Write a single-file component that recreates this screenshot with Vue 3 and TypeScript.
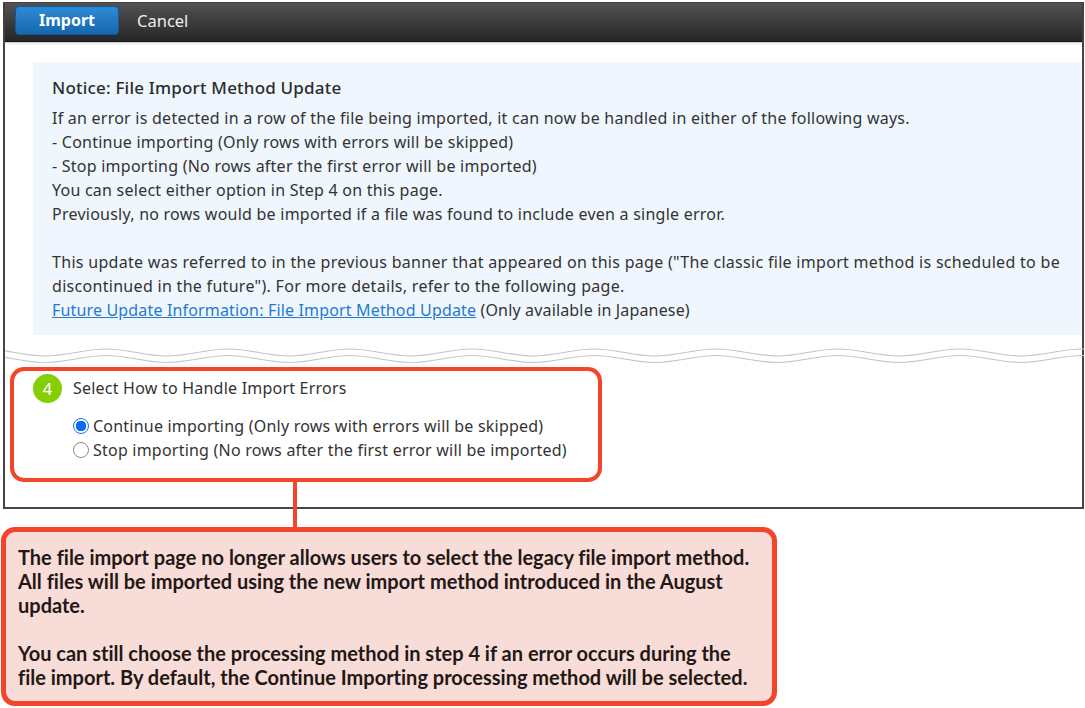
<script setup lang="ts">
const period = 122
const buildWave = (y: number): string => {
  let s = `M -21 ${y}`
  let index = 0
  for (let x = -21; x < 1090; x += period / 2) {
    const a = index % 2 === 0 ? y : y + 7
    const b = index % 2 === 0 ? y + 7 : y
    s += ` C ${x + 22} ${a}, ${x + 39} ${b}, ${x + 61} ${b}`
    index++
  }
  return s
}
const waves = [buildWave(349), buildWave(355.5)]
</script>

<template>
  <div class="page">
    <section class="frame">
      <header class="toolbar">
        <button class="import">Import</button>
        <span class="cancel">Cancel</span>
      </header>
      <div class="notice">
        <h2>Notice: File Import Method Update</h2>
        <p>If an error is detected in a row of the file being imported, it can now be handled in either of the following ways.</p>
        <p>- Continue importing (Only rows with errors will be skipped)</p>
        <p>- Stop importing (No rows after the first error will be imported)</p>
        <p>You can select either option in Step 4 on this page.</p>
        <p>Previously, no rows would be imported if a file was found to include even a single error.</p>
        <p>&nbsp;</p>
        <p class="wide">This update was referred to in the previous banner that appeared on this page ("The classic file import method is scheduled to be discontinued in the future"). For more details, refer to the following page.</p>
        <p class="tight"><a href="#">Future Update Information: File Import Method Update</a> (Only available in Japanese)</p>
      </div>
      <svg class="wave" width="1079" height="25" viewBox="0 339 1079 25">
        <path v-for="p in waves" :key="p" :d="p" fill="none" stroke="#c4c4c4" stroke-width="1.2" />
      </svg>
      <div class="step">
        <div class="step-head">
          <span class="num">4</span>
          <span>Select How to Handle Import Errors</span>
        </div>
        <div class="opt"><span class="radio on"></span>Continue importing (Only rows with errors will be skipped)</div>
        <div class="opt"><span class="radio"></span>Stop importing (No rows after the first error will be imported)</div>
      </div>
    </section>
    <div class="link"></div>
    <aside class="callout">
      <p>The file import page no longer allows users to select the legacy file import method. All files will be imported using the new import method introduced in the August update.</p>
      <p>You can still choose the processing method in step 4 if an error occurs during the file import. By default, the Continue Importing processing method will be selected.</p>
    </aside>
  </div>
</template>

<style>
html, body { margin: 0; background: #fff; }
</style>

<style scoped>
.page {
  position: relative;
  width: 1085px;
  height: 708px;
  overflow: hidden;
  font-family: "Noto Sans", sans-serif;
  color: #333;
}
.frame {
  box-sizing: border-box;
  width: 1081px;
  height: 507px;
  margin: 2px 0 0 3px;
  border: 2px solid #4b4343;
  border-top-width: 1px;
}
.toolbar {
  height: 39px;
  display: flex;
  align-items: center;
  padding: 0 0 4px 10px;
  box-sizing: border-box;
  background: linear-gradient(#525252, #262626);
  border-bottom: 1px solid #111;
  box-shadow: 0 1px 2px rgba(0, 0, 0, .25);
}
.import {
  width: 104px;
  height: 29px;
  border: 1px solid #0f5a9c;
  border-radius: 4px;
  background: linear-gradient(#2f8ad6, #1567ae);
  color: #fff;
  font: 700 16px "Noto Sans", sans-serif;
}
.cancel { margin-left: 18px; color: #eee; font-size: 16.5px; }
.notice {
  box-sizing: border-box;
  height: 273px;
  margin: 20px 0 0 28px;
  padding: 13px 18px 0 19px;
  background: #eff6fe;
  font-size: 16px;
  line-height: 24px;
}
.notice h2 { margin: 0 0 5px; font-size: 17px; font-weight: 500; line-height: 26px; letter-spacing: .2px; color: #2c2c2c; }
.notice p { margin: 0; letter-spacing: .24px; }
.notice p.wide { letter-spacing: .3px; }
.notice p.tight { letter-spacing: .16px; }
.notice a { color: #1f7ad0; }
.wave { display: block; margin-top: 4px; margin-bottom: -25px; }
.step {
  box-sizing: border-box;
  width: 592px;
  height: 115px;
  margin: 28px 0 0 5px;
  padding: 2px 0 0 19px;
  border: 4px solid #f2452a;
  border-radius: 14px;
  font-size: 16px;
  letter-spacing: .22px;
}
.step-head { display: flex; align-items: center; gap: 11px; height: 30px; margin-bottom: 11px; }
.num {
  width: 29px;
  height: 29px;
  border-radius: 50%;
  background: #84cf04;
  color: #fff;
  display: flex;
  align-items: center;
  justify-content: center;
  font-size: 17px;
}
.opt { display: flex; align-items: center; height: 24px; margin-left: 40px; gap: 4px; white-space: nowrap; }
.radio {
  box-sizing: border-box;
  width: 16px;
  height: 16px;
  flex: none;
  border: 1px solid #8a8a8a;
  border-radius: 50%;
  background: #fff;
}
.radio.on { border: 1px solid #1a73e8; background: radial-gradient(circle, #0a6cf5 0 5px, #fff 5.5px); }
.link {
  position: absolute;
  left: 293px;
  top: 482px;
  width: 4px;
  height: 47px;
  background: #f2452a;
}
.callout {
  box-sizing: border-box;
  width: 776px;
  height: 179px;
  margin: 18px 0 0 1px;
  padding: 13px 16px 0 12px;
  border: 5px solid #f2452a;
  border-radius: 14px;
  background: #f8dcd8;
  color: #231815;
  font: 700 20px/24px Lato, sans-serif;
  font-variant-ligatures: none;
}
.callout p { margin: 0 0 24px; }
</style>
